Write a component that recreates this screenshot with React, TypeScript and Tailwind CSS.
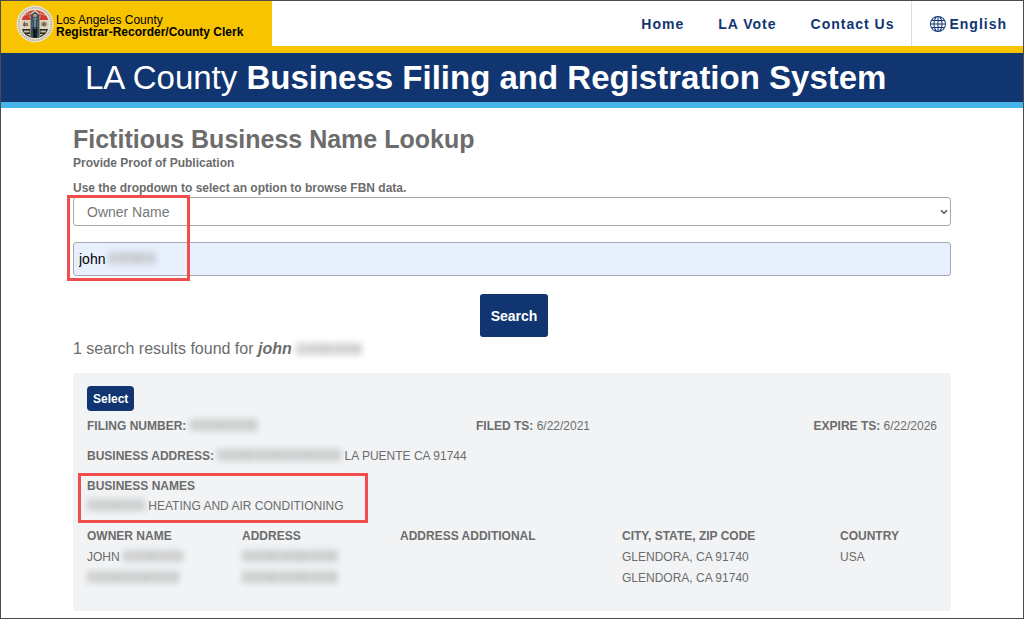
import { BsGlobe } from "react-icons/bs";

const navItems = ["Home", "LA Vote", "Contact Us"];

function CountySeal() {
  return (
    <svg viewBox="0 0 38 38" className="size-[38px] shrink-0" role="img" aria-label="County of Los Angeles seal">
      <circle cx="19" cy="19" r="18.5" fill="#e9e2cc" />
      <circle cx="19" cy="19" r="16.3" fill="none" stroke="#a8a397" strokeWidth="1.8" strokeDasharray="1 1.1" />
      <circle cx="19" cy="19" r="14" fill="#ded6c0" />
      <path d="M19 5a14 14 0 0 0-13.4 10H15V8z" fill="#cf3a33" />
      <path d="M19 5a14 14 0 0 1 13.400 10H23V8z" fill="#cf3a33" />
      <path d="M8.500 10.500 14 8v5M29.500 10.500 24 8v5" fill="none" stroke="#ddb3a0" strokeWidth="0.8" />
      <path d="M5.300 16H14v6.500H5.800zM24 16h8.700l-.5 6.500H24z" fill="#d8cdb2" />
      <path d="M7 18h5v3H7zM25.500 17.500h5V21h-5z" fill="#8d7465" />
      <path d="M8.500 16.500v5M28 16.500v5" stroke="#53534b" strokeWidth="0.8" />
      <path d="M6 24h26c-1.500 5.500-6.500 9-13 9S7.500 29.500 6 24z" fill="#24251f" />
      <path d="M7.500 25.500h6v2h-5zM24.500 25.500h6l-1 2h-5zM10 29h4v2zM24 29h4l-4 2z" fill="#c8bc9d" />
      <path d="M14.500 10 19 6.500 23.500 10v22.200h-9z" fill="#3c5560" />
      <circle cx="19" cy="10.500" r="1.800" fill="#c09a78" />
      <path d="M17 13h4l1.300 9h-6.600z" fill="#718791" />
      <path d="M17.200 14.500v14M20.800 14.500v14" stroke="#182c37" strokeWidth="1" />
      <path d="M17 24h4v8.500h-4z" fill="#10191e" />
      <path d="M14.500 11v21M23.500 11v21" stroke="#a5977b" strokeWidth="0.7" />
    </svg>
  );
}

function Redacted({ className }: { className: string }) {
  return (
    <span aria-hidden="true" className={`inline-block h-3.5 align-text-bottom ${className}`}>
      <span className="block h-3 bg-[repeating-linear-gradient(90deg,#b0b0b0_0px,#c0c0c0_8px,#b4b4b4_15px,#bcbcbc_22px,#b0b0b0_30px)] opacity-60 blur-[3px]" />
    </span>
  );
}

export default function App() {
  return (
    <div className="flex min-h-screen flex-col border border-[#4b4b4f] bg-white font-['Liberation_Sans',Arial,sans-serif] text-xs text-[#6c6c6c]">
      <header>
        <div className="flex h-[45px] justify-between bg-white">
          <a href="#" className="flex w-[271px] items-center bg-[#f8c400] pl-[15px] text-black">
            <CountySeal />
            <span className="pl-0.5 pt-1 leading-3">
              Los Angeles County
              <b className="block">Registrar-Recorder/County Clerk</b>
            </span>
          </a>
          <nav className="flex text-sm font-bold tracking-[1px] text-[#103571]">
            <div className="flex items-center gap-[34px] pr-[17px]">
              {navItems.map((item) => (
                <a key={item} href="#">{item}</a>
              ))}
            </div>
            <a href="#" className="flex items-center gap-[3px] border-l border-[#dedede] pl-[18px] pr-4">
              <BsGlobe className="size-4" />
              English
            </a>
          </nav>
        </div>
        <div className="border-b-[6px] border-t-[7px] border-b-[#46b3e9] border-t-[#f8c400] bg-[#103571] pl-[84px]">
          <p className="text-[33px] leading-[49px] text-white">
            LA County <b>Business Filing and Registration System</b>
          </p>
        </div>
      </header>

      <main className="px-[72px] pb-1.5 pt-[17px]">
        <h1 className="text-[25px] font-bold leading-7">Fictitious Business Name Lookup</h1>
        <p className="font-bold leading-5">Provide Proof of Publication</p>

        <form onSubmit={(event) => event.preventDefault()}>
          <label htmlFor="lookup-type" className="block pt-1.5 font-bold leading-[18px]">
            Use the dropdown to select an option to browse FBN data.
          </label>
          <div className="relative">
            <div className="relative">
              <select
                id="lookup-type"
                defaultValue="owner"
                className="block h-[29px] w-full appearance-none rounded-[3px] border border-[#a8a8ac] bg-white pl-[13px] text-sm text-[#777]"
              >
                <option value="owner">Owner Name</option>
                <option value="business">Business Name</option>
              </select>
              <svg viewBox="0 0 8 6" className="pointer-events-none absolute right-[3px] top-3 h-1.5 w-2" aria-hidden="true">
                <path d="M1 1.200 4 4.200 7 1.200" fill="none" stroke="#555" strokeWidth="1.500" />
              </svg>
            </div>
            <div className="relative mt-4">
              <input
                type="text"
                aria-label="Owner name"
                defaultValue="john"
                className="block h-[34px] w-full rounded-[3px] border border-[#a8a8ac] bg-[#e8f0fe] px-[5px] text-sm text-black"
              />
              <span className="pointer-events-none absolute left-[35px] top-[9px]">
                <Redacted className="w-12" />
              </span>
            </div>
            <div className="pointer-events-none absolute -left-1.5 -top-0.5 h-[86px] w-[123px] border-[3px] border-[#f04d4d]" />
          </div>
          <div className="flex justify-center pl-1 pt-[18px]">
            <button type="submit" className="h-[43px] rounded-[3px] bg-[#103571] px-[11px] text-sm font-bold text-white">
              Search
            </button>
          </div>
        </form>

        <p className="text-base leading-6">
          1 search results found for <b className="italic">john</b> <Redacted className="w-[66px]" />
        </p>

        <section className="mt-3 bg-[#f1f3f5] px-3.5 pb-[22px] pt-[13px]">
          <button type="button" className="block h-[25px] rounded-sm bg-[#103571] px-1.5 font-bold text-white">
            Select
          </button>
          <div className="flex pt-[5px] leading-5">
            <p className="w-[389px]">
              <b>FILING NUMBER:</b> <Redacted className="w-[68px]" />
            </p>
            <p>
              <b>FILED TS:</b> 6/22/2021
            </p>
            <p className="ml-auto">
              <b>EXPIRE TS:</b> 6/22/2026
            </p>
          </div>
          <p className="pt-2.5 leading-5">
            <b>BUSINESS ADDRESS:</b> <Redacted className="w-[124px]" /> LA PUENTE CA 91744
          </p>
          <div className="relative pt-2.5 leading-5">
            <h2 className="font-bold">BUSINESS NAMES</h2>
            <p>
              <Redacted className="w-[58px]" /> HEATING AND AIR CONDITIONING
            </p>
            <div className="pointer-events-none absolute -left-[9px] top-[7px] h-[50px] w-[290px] border-[3px] border-[#f04d4d]" />
          </div>
          <table className="mt-2.5 w-full table-fixed text-left leading-[21px]">
            <thead>
              <tr>
                <th className="w-[155px]">OWNER NAME</th>
                <th className="w-[158px]">ADDRESS</th>
                <th className="w-[222px]">ADDRESS ADDITIONAL</th>
                <th className="w-[218px]">CITY, STATE, ZIP CODE</th>
                <th>COUNTRY</th>
              </tr>
            </thead>
            <tbody>
              <tr>
                <td>JOHN <Redacted className="w-[60px]" /></td>
                <td><Redacted className="w-24" /></td>
                <td />
                <td>GLENDORA, CA 91740</td>
                <td>USA</td>
              </tr>
              <tr>
                <td><Redacted className="w-[92px]" /></td>
                <td><Redacted className="w-24" /></td>
                <td />
                <td>GLENDORA, CA 91740</td>
                <td />
              </tr>
            </tbody>
          </table>
        </section>
      </main>
    </div>
  );
}
